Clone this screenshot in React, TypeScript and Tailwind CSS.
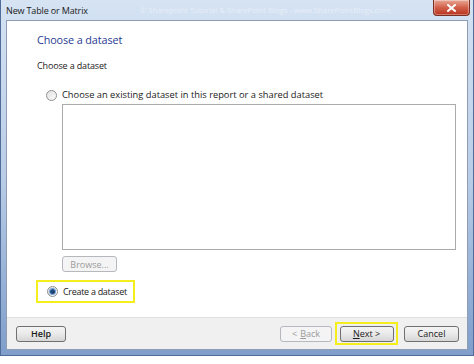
import React from 'react';

function Radio({ checked }: { checked?: boolean }) {
  return (
    <span className="flex h-[11px] w-[11px] items-center justify-center rounded-full border border-[#8e8f8f] bg-gradient-to-br from-[#e2e2e2] to-[#fbfbfb]">
      {checked && (
        <span className="h-[5px] w-[5px] rounded-full bg-gradient-to-br from-[#2b5f9c] to-[#0d2e5d] ring-1 ring-[#6fa0d8]" />
      )}
    </span>
  );
}

function WinButton({
  children,
  disabled,
  className = '',
}: {
  children: React.ReactNode;
  disabled?: boolean;
  className?: string;
}) {
  return (
    <button
      className={
        'flex h-[16px] items-center justify-center rounded-[3px] border text-[9px] leading-none ' +
        (disabled
          ? 'border-[#b5b9bd] bg-[#f4f4f4] text-[#9b9b9b] '
          : 'border-[#707070] bg-gradient-to-b from-[#f4f4f4] via-[#e9e9e9] to-[#d6d6d6] text-[#1a1a1a] ') +
        className
      }
    >
      {children}
    </button>
  );
}

export default function App() {
  return (
    <div
      className="h-[364px] w-[474px] overflow-hidden bg-white text-[#1a1a1a]"
      style={{ fontFamily: '"Open Sans", "Noto Sans", sans-serif' }}
    >
      {/* Window frame */}
      <div className="flex h-[356px] w-[474px] flex-col border-l border-r border-b border-[#4f6d98] bg-gradient-to-b from-[#d5e3f3] via-[#b9cde7] to-[#7f9ecb]">
        {/* Title bar */}
        <div className="flex h-[20px] items-start">
          <span className="mt-[5px] ml-[5px] text-[9px] leading-[12px] tracking-[-0.15px] text-[#1b1b1b]">New Table or Matrix</span>
          <span className="mt-[4px] ml-[52px] text-[8px] leading-[12px] tracking-[-0.15px] text-[#e9f0f9] opacity-90">
            © Sharepoint Tutorial &amp; SharePoint Blogs - www.SharePointBlogs.com
          </span>
          <div className="ml-auto mr-[3px] flex h-[16px] w-[37px] items-center justify-center rounded-b-[4px] border border-t-0 border-[#7a2f22] bg-gradient-to-b from-[#e8a796] via-[#d1604a] to-[#b8321d] shadow-[inset_0_0_0_1px_rgba(255,255,255,0.35)]">
            <svg width="9" height="8" viewBox="0 0 9 8">
              <path d="M1 1 L8 7 M8 1 L1 7" stroke="#ffffff" strokeWidth="2" strokeLinecap="square" />
            </svg>
          </div>
        </div>

        {/* Client area */}
        <div className="mx-[5px] flex flex-1 flex-col border border-[#8e9db3] bg-white">
          <div className="flex flex-1 flex-col pl-[30px]">
            <div className="mt-[11px] text-[10.8px] leading-[16px] tracking-[-0.1px] text-[#1f3b92]">Choose a dataset</div>
            <div className="mt-[11px] text-[9px] leading-[14px] tracking-[-0.15px]">Choose a dataset</div>

            <div className="mt-[15px] ml-[9px] flex h-[14px] items-center gap-[5px]">
              <Radio />
              <span className="text-[9.3px] leading-[14px]">Choose an existing dataset in this report or a shared dataset</span>
            </div>

            <div className="mt-[2px] ml-[25px] mr-[11px] h-[146px] border border-[#ababab] bg-white" />

            <div className="mt-[6px] ml-[25px]">
              <WinButton disabled className="w-[55px]">
                Browse...
              </WinButton>
            </div>

            <div className="mt-[8px] ml-[-1px] flex h-[23px] w-[99px] items-center gap-[5px] border-2 border-[#f4ee1c] pl-[9px]">
              <Radio checked />
              <span className="text-[9px] leading-[14px] tracking-[-0.3px]">Create a dataset</span>
            </div>
          </div>

          {/* Footer */}
          <div className="flex h-[32px] items-center border-t border-[#dfdfdf] bg-[#f0f0f0] pl-[9px] pr-[8px]">
            <WinButton className="w-[50px] font-semibold">Help</WinButton>
            <div className="ml-auto flex items-center">
              <WinButton disabled className="w-[52px]">
                &lt; <span className="ml-[3px] underline">B</span>ack
              </WinButton>
              <div className="ml-[3px] flex h-[23px] w-[63px] items-center justify-center border-2 border-[#f4ee1c]">
                <WinButton className="w-[54px]">
                  <span className="underline">N</span>ext &gt;
                </WinButton>
              </div>
              <WinButton className="ml-[6px] w-[55px]">Cancel</WinButton>
            </div>
          </div>
        </div>
        <div className="h-[5px]" />
      </div>
    </div>
  );
}
